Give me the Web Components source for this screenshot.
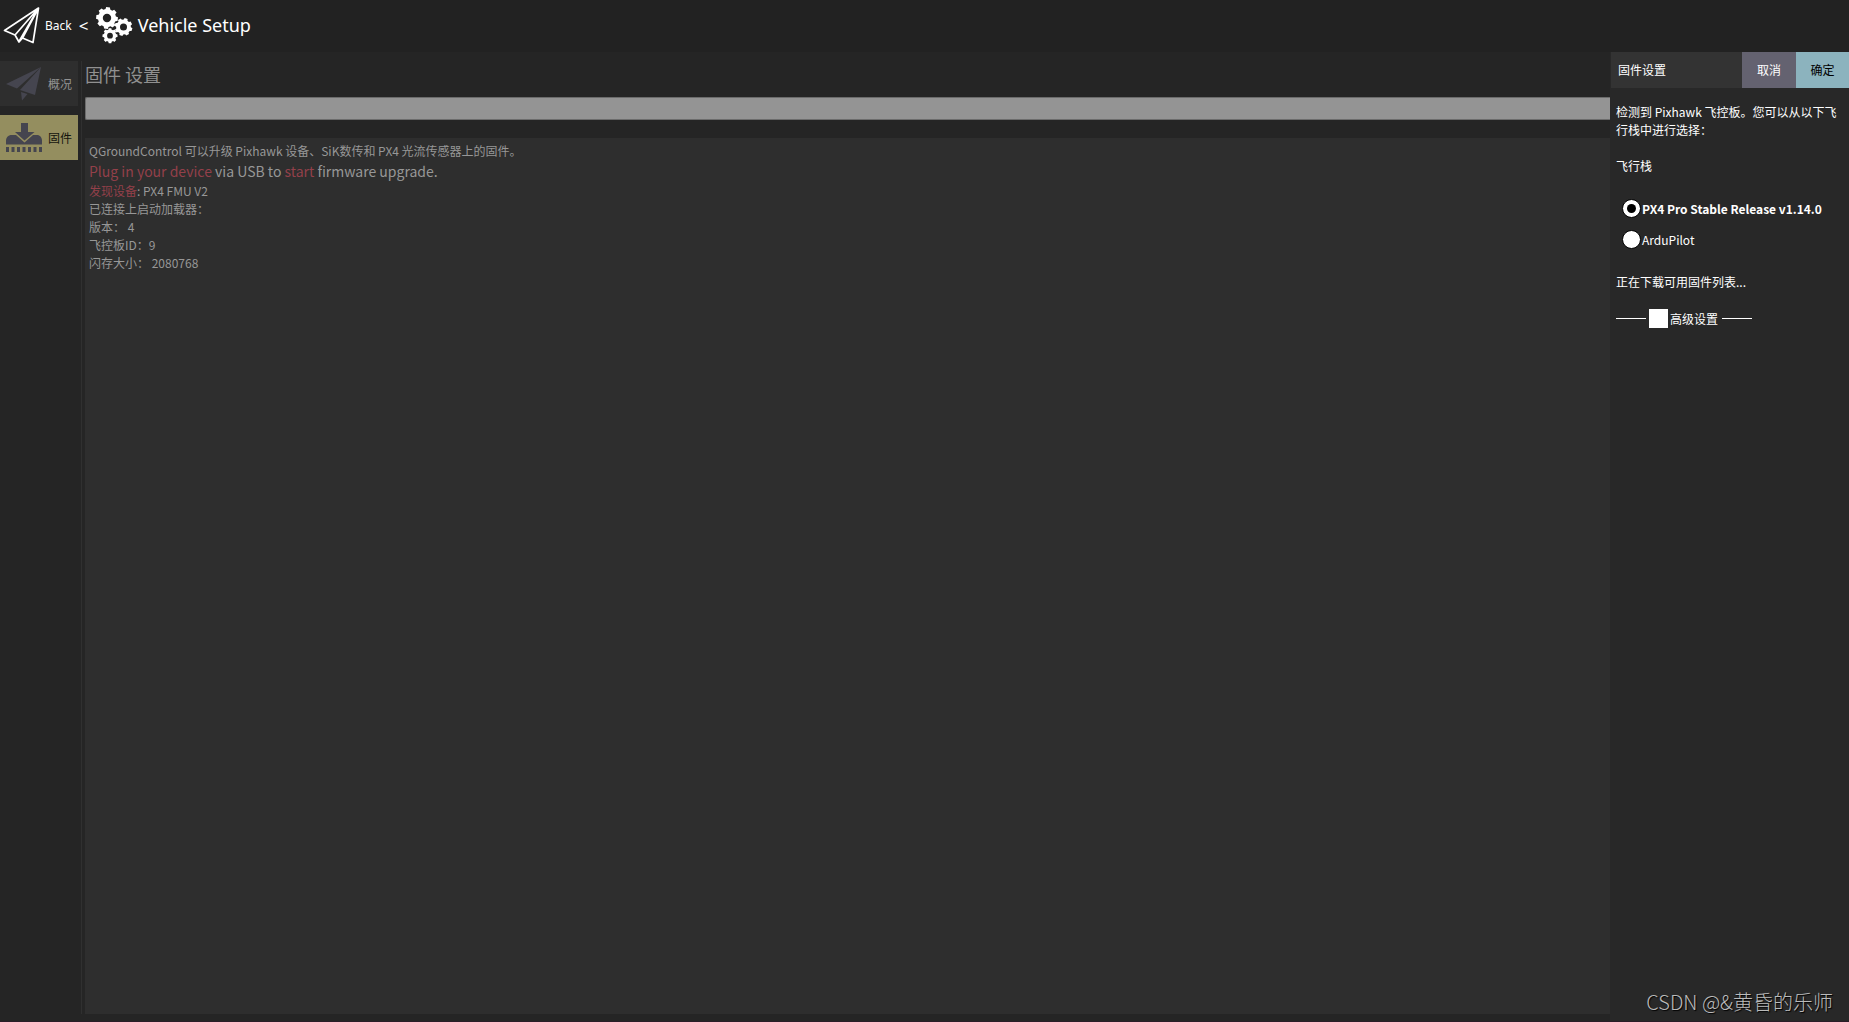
<!DOCTYPE html>
<html lang="zh-CN">
<head>
<meta charset="UTF-8">
<title>Vehicle Setup</title>
<style>
    body {
        margin: 0;
        background: #252525;
        font: 12px/18px "Noto Sans CJK SC", sans-serif;
        overflow: hidden;
    }
</style>
</head>
<body>
<setup-app></setup-app>

<script>
const icons = {
    plane: `<svg width="37" height="38" viewBox="0 0 37 38" fill="none" stroke="#fff" stroke-width="1.7" stroke-linejoin="round">
        <path d="M35.5 2 1.5 24.5 12 29 16 36 19.5 32 30 36.5Z M35.5 2 12 29 M35.5 2 16 35.5 M35.5 2 19.5 32"/></svg>`,
    planeDark: `<svg width="36" height="36" viewBox="0 0 36 36" fill="#45454f">
        <path d="M35 1 0 18 11 22.5Z M35 1 14 24 29 29Z M15 26 21.5 28 16 34.5Z"/></svg>`,
    firmware: `<svg width="36" height="31" viewBox="0 0 36 31" fill="#45454f">
        <path d="M15 1h7v9h6.5L18.500 18.500 9 10h6Z"/>
        <path d="M4.500 13H10L18.500 20.500 27 13H32Q35.500 14 36 18V22.500H0V18Q.5 14 4.500 13Z"/>
        <path d="M0 25h3v5H0Zm5.500 0h3v5h-3Zm5.500 0h3v5h-3Zm5.500 0h3v5h-3Zm5.500 0h3v5h-3Zm5.500 0h3v5h-3Zm5.500 0h3v5h-3Z"/></svg>`
};

// toothed wheel with a round hole, as one even-odd path
function gear(cx, cy, r, hole, teeth, turn = 0) {
    const points = [];
    const step = Math.PI * 2 / teeth;
    for (let i = 0; i < teeth; i++) {
        [[-0.34, 0.82], [-0.22, 1], [0.22, 1], [0.34, 0.82]].forEach(([a, k]) => {
            const angle = (i + a) * step + turn;
            points.push(`${(cx + Math.cos(angle) * r * k).toFixed(2)} ${(cy + Math.sin(angle) * r * k).toFixed(2)}`);
        });
    }
    return `<path d="M${points.join('L')}Z M${cx - hole} ${cy}a${hole} ${hole} 0 1 0 ${hole * 2} 0a${hole} ${hole} 0 1 0 ${-hole * 2} 0Z"/>`;
}

icons.gears = `<svg width="37" height="37" viewBox="0 0 37 37" fill="#fff" fill-rule="evenodd">
    ${gear(11, 11, 11, 4.2, 8, 0.1)}${gear(27.5, 20, 9, 3.5, 8, 0.3)}${gear(14, 28.7, 7.6, 2.9, 8)}</svg>`;

class SetupToolbar extends HTMLElement {
    constructor() {
        super();
        this.attachShadow({ mode: 'open' });
    }

    connectedCallback() {
        this.shadowRoot.innerHTML = `
            <style>
                :host {
                    display: flex;
                    align-items: center;
                    height: 52px;
                    box-sizing: border-box;
                    padding: 0 0 2px 3px;
                    background: #222;
                    color: #fff;
                    font: 12px/18px "Noto Sans", sans-serif;
                }
                svg { display: block; }
                .back { margin-left: 5px; padding-top: 2px; }
                .arrow { width: 10px; margin: 0 7px; padding-top: 2px; font-size: 17px; }
                .title { margin-left: 5px; font-size: 18px; line-height: 24px; }
            </style>
            ${icons.plane}
            <span class="back">Back</span>
            <span class="arrow">&lt;</span>
            ${icons.gears}
            <span class="title"><slot></slot></span>
        `;
    }
}

class NavButton extends HTMLElement {
    constructor() {
        super();
        this.attachShadow({ mode: 'open' });
    }

    connectedCallback() {
        this.shadowRoot.innerHTML = `
            <style>
                :host {
                    display: flex;
                    align-items: center;
                    gap: 6px;
                    width: 78px;
                    height: 45px;
                    box-sizing: border-box;
                    padding-left: 6px;
                    background: #2e2e2e;
                    color: #939393;
                }
                :host([active]) {
                    background: #948e5f;
                    color: #15150e;
                }
                svg { flex: none; display: block; }
            </style>
            ${icons[this.getAttribute('icon')]}
            <slot></slot>
        `;
    }
}

class FirmwareLog extends HTMLElement {
    constructor() {
        super();
        this.attachShadow({ mode: 'open' });
    }

    connectedCallback() {
        this.shadowRoot.innerHTML = `
            <style>
                :host {
                    display: block;
                    box-sizing: border-box;
                    padding: 4px;
                    background: #2e2e2e;
                    color: #979797;
                }
                p { margin: 0; white-space: pre; }
                .plug { font-size: 14px; line-height: 22px; }
                em { font-style: normal; color: #93404a; }
            </style>
            <p>QGroundControl 可以升级 Pixhawk 设备、SiK数传和 PX4 光流传感器上的固件。</p>
            <p class="plug"><em>Plug in your device</em> via USB to <em>start</em> firmware upgrade.</p>
            <p><em>发现设备</em>: PX4 FMU V2</p>
            <p>已连接上启动加载器：</p>
            <p>版本： 4</p>
            <p>飞控板ID：9</p>
            <p>闪存大小： 2080768</p>
        `;
    }
}

class RadioOption extends HTMLElement {
    constructor() {
        super();
        this.attachShadow({ mode: 'open' });
    }

    connectedCallback() {
        this.shadowRoot.innerHTML = `
            <style>
                :host {
                    display: flex;
                    align-items: center;
                    gap: 1px;
                    height: 19px;
                }
                :host([checked]) { font-weight: 700; }
                .dot {
                    display: grid;
                    place-items: center;
                    width: 19px;
                    height: 19px;
                    box-sizing: border-box;
                    border: 1px solid #000;
                    border-radius: 50%;
                    background: #fff;
                }
                :host([checked]) .dot::after {
                    content: "";
                    width: 9px;
                    height: 9px;
                    border-radius: 50%;
                    background: #000;
                }
            </style>
            <span class="dot"></span>
            <slot></slot>
        `;
    }
}

class FirmwarePanel extends HTMLElement {
    constructor() {
        super();
        this.attachShadow({ mode: 'open' });
    }

    connectedCallback() {
        this.shadowRoot.innerHTML = `
            <style>
                :host {
                    display: block;
                    width: 239px;
                    background: #282828;
                    color: #fff;
                }
                header {
                    display: flex;
                    height: 36px;
                    margin-left: 1px;
                    line-height: 36px;
                    background: #333;
                }
                .name { flex: 1; padding-left: 7px; }
                .button { width: 54px; text-align: center; background: #646270; }
                .ok { width: 53px; background: #8cb3be; color: #000; }
                .body { padding: 15px 4px 0 6px; }
                p { margin: 0 0 18px; }
                .intro { width: 222px; }
                radio-option { margin: 0 0 12px 6px; }
                .first { margin-top: 24px; }
                .status { margin-top: 24px; }
                .advanced { display: flex; align-items: center; }
                .line { width: 30px; height: 1px; background: #fff; }
                .box { width: 19px; height: 19px; margin: 0 2px 0 3px; background: #fff; }
                .label { margin-right: 4px; }
            </style>
            <header>
                <span class="name">固件设置</span>
                <span class="button">取消</span>
                <span class="button ok">确定</span>
            </header>
            <div class="body">
                <p class="intro">检测到 Pixhawk 飞控板。您可以从以下飞行栈中进行选择：</p>
                <p>飞行栈</p>
                <radio-option class="first" checked>PX4 Pro Stable Release v1.14.0</radio-option>
                <radio-option>ArduPilot</radio-option>
                <p class="status">正在下载可用固件列表...</p>
                <div class="advanced">
                    <span class="line"></span>
                    <span class="box"></span>
                    <span class="label">高级设置</span>
                    <span class="line"></span>
                </div>
            </div>
        `;
    }
}

class SetupApp extends HTMLElement {
    constructor() {
        super();
        this.attachShadow({ mode: 'open' });
    }

    connectedCallback() {
        this.shadowRoot.innerHTML = `
            <style>
                :host {
                    display: flex;
                    flex-direction: column;
                    height: 100vh;
                    box-sizing: border-box;
                    border-bottom: 1px solid #2a1d28;
                }
                .content { flex: 1; display: flex; min-height: 0; }
                nav {
                    display: flex;
                    flex-direction: column;
                    gap: 9px;
                    width: 81px;
                    padding-top: 9px;
                }
                .divider { width: 1px; margin: 9px 3px 7px 0; background: #303030; }
                main {
                    flex: 1;
                    display: flex;
                    flex-direction: column;
                    min-width: 0;
                    padding-bottom: 7px;
                }
                h1 {
                    margin: 9px 0 10px;
                    font-size: 18px;
                    font-weight: 400;
                    line-height: 26px;
                    color: #909090;
                }
                .progress {
                    height: 23px;
                    box-sizing: border-box;
                    border: 1px solid #6c6c6c;
                    border-right: 0;
                    border-radius: 2px 0 0 2px;
                    background: #949494;
                }
                firmware-log { flex: 1; margin-top: 18px; }
                .watermark {
                    position: absolute;
                    right: 16px;
                    bottom: 5px;
                    font-size: 20px;
                    line-height: 30px;
                    font-weight: 300;
                    color: #bbb;
                    text-shadow: 1px 1px 1px #000;
                }
            </style>
            <setup-toolbar>Vehicle Setup</setup-toolbar>
            <div class="content">
                <nav>
                    <nav-button icon="planeDark">概况</nav-button>
                    <nav-button icon="firmware" active>固件</nav-button>
                </nav>
                <div class="divider"></div>
                <main>
                    <h1>固件 设置</h1>
                    <div class="progress"></div>
                    <firmware-log></firmware-log>
                </main>
                <firmware-panel></firmware-panel>
            </div>
            <div class="watermark">CSDN @&amp;黄昏的乐师</div>
        `;
    }
}

customElements.define('setup-toolbar', SetupToolbar);
customElements.define('nav-button', NavButton);
customElements.define('firmware-log', FirmwareLog);
customElements.define('radio-option', RadioOption);
customElements.define('firmware-panel', FirmwarePanel);
customElements.define('setup-app', SetupApp);
</script>
</body>
</html>
